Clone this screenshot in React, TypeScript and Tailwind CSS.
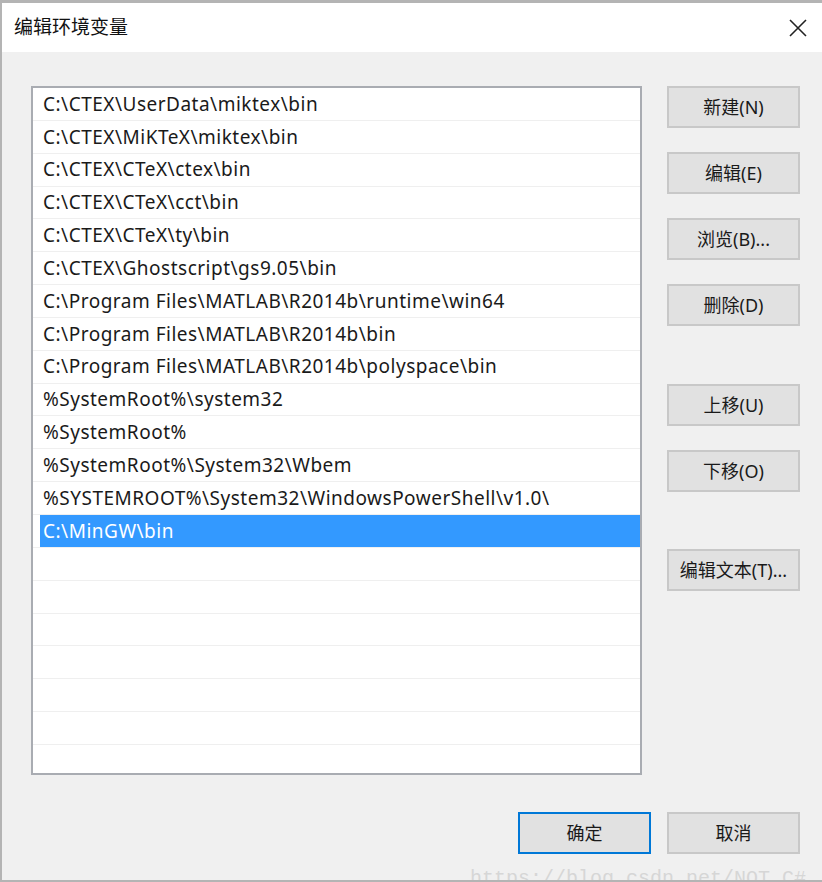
import React from "react";

const items = [
  "C:\\CTEX\\UserData\\miktex\\bin",
  "C:\\CTEX\\MiKTeX\\miktex\\bin",
  "C:\\CTEX\\CTeX\\ctex\\bin",
  "C:\\CTEX\\CTeX\\cct\\bin",
  "C:\\CTEX\\CTeX\\ty\\bin",
  "C:\\CTEX\\Ghostscript\\gs9.05\\bin",
  "C:\\Program Files\\MATLAB\\R2014b\\runtime\\win64",
  "C:\\Program Files\\MATLAB\\R2014b\\bin",
  "C:\\Program Files\\MATLAB\\R2014b\\polyspace\\bin",
  "%SystemRoot%\\system32",
  "%SystemRoot%",
  "%SystemRoot%\\System32\\Wbem",
  "%SYSTEMROOT%\\System32\\WindowsPowerShell\\v1.0\\",
  "C:\\MinGW\\bin",
];

const font = { fontFamily: '"Noto Sans", "Noto Sans CJK SC", sans-serif' };

function Btn({ label, primary, className = "" }: { label: string; primary?: boolean; className?: string }) {
  return (
    <div
      className={
        "flex h-[42px] w-[133px] items-center justify-center bg-[#e1e1e1] text-[18px] text-[#1a1a1a] " +
        (primary ? "border-2 border-[#0078d7] " : "border-2 border-[#c8c8c8] ") +
        className
      }
    >
      {label}
    </div>
  );
}

export default function App() {
  const empty = Array.from({ length: 7 });
  return (
    <div className="h-[882px] w-[822px] overflow-hidden bg-white" style={font}>
      <div className="flex h-[882px] w-[822px] flex-col border-b-2 border-l-2 border-t-[3px] border-[#b4b4b4]">
        <div className="flex h-[49px] shrink-0 items-center justify-between bg-white pl-[12px] pr-[14px]">
          <span className="text-[19px] text-[#111]">编辑环境变量</span>
          <svg width="18" height="18" viewBox="0 0 18 18" className="mr-[1px]">
            <path d="M1 1 L17 17 M17 1 L1 17" stroke="#222" strokeWidth="1.6" />
          </svg>
        </div>
        <div className="relative flex flex-1 flex-col overflow-hidden bg-[#f0f0f0] pl-[29px] pr-[22px] pt-[34px]">
          <div className="flex gap-[25px]">
            <div className="h-[689px] w-[611px] overflow-hidden border-2 border-[#a9acb2] bg-white">
              {items.map((t, i) =>
                i === items.length - 1 ? (
                  <div key={i} className="h-[32.85px] border-b border-[#f0f0f0] pl-[7px]">
                    <div className="flex h-full items-center bg-[#3399ff] pl-[3px] text-[19px] tracking-[0.5px] text-white">
                      {t}
                    </div>
                  </div>
                ) : (
                  <div
                    key={i}
                    className="flex h-[32.85px] items-center whitespace-nowrap border-b border-[#efefef] pl-[10px] text-[19px] tracking-[0.5px] text-[#1a1a1a]"
                  >
                    {t}
                  </div>
                )
              )}
              {empty.map((_, i) => (
                <div key={"e" + i} className="h-[32.85px] border-b border-[#efefef]" />
              ))}
            </div>
            <div className="flex flex-col">
              <Btn label="新建(N)" />
              <Btn label="编辑(E)" className="mt-[24px]" />
              <Btn label="浏览(B)..." className="mt-[24px]" />
              <Btn label="删除(D)" className="mt-[24px]" />
              <Btn label="上移(U)" className="mt-[58px]" />
              <Btn label="下移(O)" className="mt-[24px]" />
              <Btn label="编辑文本(T)..." className="mt-[57px]" />
            </div>
          </div>
          <div className="mt-[37px] flex justify-end gap-[16px]">
            <Btn label="确定" primary />
            <Btn label="取消" />
          </div>
          <div
            className="absolute left-[468px] top-[812px] whitespace-nowrap text-[20px] text-[#d6d6d6]"
            style={{ fontFamily: '"Liberation Mono", monospace' }}
          >
            https://blog.csdn.net/NOT_C#
          </div>
        </div>
      </div>
    </div>
  );
}
